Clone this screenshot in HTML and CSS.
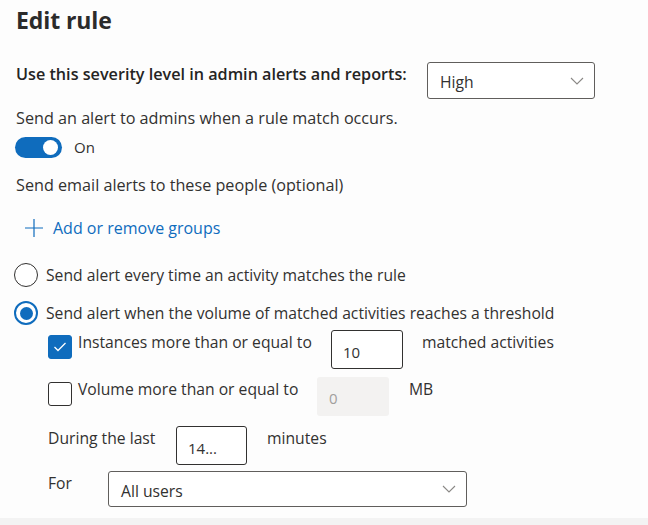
FILE: index.html
```html
<!DOCTYPE html>
<html>
<head>
<meta charset="utf-8">
<link rel="stylesheet" href="styles.css">
</head>
<body>
<div class="panel">
  <h1 class="title">Edit rule</h1>
  <div class="sev-row">
    <div class="sev-label">Use this severity level in admin alerts and reports:</div>
    <div class="select sev-select"><span>High</span><svg class="chev" width="14" height="8" viewBox="0 0 14 8"><path d="M1 1l6 6 6-6" fill="none" stroke="#8a8886" stroke-width="1.1"/></svg></div>
  </div>
  <div class="line l-admins">Send an alert to admins when a rule match occurs.</div>
  <div class="toggle-row">
    <span class="toggle"><span class="knob"></span></span>
    <span class="toggle-text">On</span>
  </div>
  <div class="line l-email">Send email alerts to these people (optional)</div>
  <div class="add-row">
    <svg class="plus" width="18" height="18" viewBox="0 0 18 18"><path d="M9 0v18M0 9h18" stroke="#0f6cbd" stroke-width="1.2"/></svg>
    <span class="add-text">Add or remove groups</span>
  </div>
  <div class="radio-row r1">
    <span class="radio"></span>
    <span class="radio-text">Send alert every time an activity matches the rule</span>
  </div>
  <div class="radio-row r2">
    <span class="radio on"><span class="dot"></span></span>
    <span class="radio-text">Send alert when the volume of matched activities reaches a threshold</span>
  </div>
  <div class="threshold">
    <div class="check-row c1">
      <span class="check on"><svg width="14" height="10" viewBox="0 0 14 10"><path d="M1.5 5l3.5 3.5 7.5-7.5" fill="none" stroke="#fff" stroke-width="1.3"/></svg></span>
      <span class="check-text t1">Instances more than or equal to</span>
      <span class="input in1">10</span>
      <span class="after a1">matched activities</span>
    </div>
    <div class="check-row c2">
      <span class="check"></span>
      <span class="check-text t2">Volume more than or equal to</span>
      <span class="input disabled in2">0</span>
      <span class="after a2">MB</span>
    </div>
    <div class="field-row during">
      <span class="field-label fl1">During the last</span>
      <span class="input in3">14...</span>
      <span class="after a3">minutes</span>
    </div>
    <div class="field-row for">
      <span class="field-label fl2">For</span>
      <div class="select for-select"><span>All users</span><svg class="chev" width="14" height="8" viewBox="0 0 14 8"><path d="M1 1l6 6 6-6" fill="none" stroke="#8a8886" stroke-width="1.1"/></svg></div>
    </div>
  </div>
</div>
<div class="footer"></div>
</body>
</html>
```
FILE: styles.css
```css
html, body {
  margin: 0;
  padding: 0;
  background: #fdfdfd;
}
body {
  width: 648px;
  height: 525px;
  overflow: hidden;
  position: relative;
  font-family: "Open Sans", "Noto Sans", sans-serif;
  font-size: 15.7px;
  color: #323130;
}
.panel {
  padding: 0 16px;
  height: 518px;
}
.title {
  margin: 5px 0 0;
  font-size: 23px;
  line-height: 30px;
  font-weight: 700;
  color: #2b2b2b;
  letter-spacing: -0.1px;
}
.sev-row {
  display: flex;
  align-items: flex-start;
  margin-top: 27px;
}
.sev-label {
  font-weight: 600;
  font-size: 16.2px;
  line-height: 20px;
  padding-top: 2px;
  width: 411px;
  white-space: nowrap;
  color: #252423;
}
.select {
  box-sizing: border-box;
  border: 1px solid #605e5c;
  border-radius: 3px;
  display: flex;
  align-items: center;
  justify-content: space-between;
  padding: 0 10px 0 12px;
  background: #fff;
}
.select span { padding-top: 3px; }
.sev-select {
  width: 168px;
  height: 37px;
}
.for-select {
  width: 359px;
  height: 36px;
}
.line {
  line-height: 20px;
  font-size: 16.2px;
}
.l-admins { margin-top: 9px; }
.toggle-row {
  display: flex;
  align-items: center;
  margin-top: 9px;
  height: 20px;
}
.toggle {
  box-sizing: border-box;
  width: 47px;
  height: 21px;
  border-radius: 11px;
  background: #0f6cbd;
  position: relative;
  display: inline-block;
  margin-left: -1px;
}
.knob {
  position: absolute;
  right: 4px;
  top: 3px;
  width: 15px;
  height: 15px;
  border-radius: 50%;
  background: #fff;
}
.toggle-text {
  margin-left: 12px;
  font-size: 15px;
}
.l-email { margin-top: 18px; }
.add-row {
  display: flex;
  align-items: center;
  margin-top: 23px;
  height: 20px;
  padding-left: 9px;
}
.add-text {
  color: #0f6cbd;
  margin-left: 10px;
  font-size: 16px;
}
.radio-row {
  display: flex;
  align-items: center;
  height: 24px;
}
.r1 { margin-top: 25px; }
.r2 { margin-top: 14px; }
.radio {
  box-sizing: border-box;
  width: 24px;
  height: 24px;
  border-radius: 50%;
  border: 1.5px solid #323130;
  margin-left: -2px;
  display: flex;
  align-items: center;
  justify-content: center;
  background: #fff;
}
.radio.on {
  border: 2px solid #0f6cbd;
}
.dot {
  width: 13px;
  height: 13px;
  border-radius: 50%;
  background: #0f6cbd;
}
.radio-text {
  margin-left: 8px;
}
.threshold {
  padding-left: 32px;
}
.check-row, .field-row {
  display: flex;
  align-items: flex-start;
}
.c1 { margin-top: 5px; }
.c2 { margin-top: 8px; }
.during { margin-top: 10px; }
.for { margin-top: 6px; }
.check {
  box-sizing: border-box;
  width: 24px;
  height: 24px;
  border: 1px solid #323130;
  border-radius: 3px;
  margin-top: 5px;
  display: flex;
  align-items: center;
  justify-content: center;
  background: #fff;
}
.check.on {
  background: #0f6cbd;
  border-color: #0f6cbd;
}
.check-text {
  margin-left: 6px;
  line-height: 20px;
  padding-top: 2px;
  white-space: nowrap;
}
.t1 { width: 253px; }
.t2 { width: 239px; }
.input {
  box-sizing: border-box;
  height: 39px;
  border: 1px solid #323130;
  border-radius: 3px;
  padding: 11px 0 0 11px;
  line-height: 20px;
  background: #fff;
  font-size: 15px;
}
.in1 { width: 72px; }
.in2 { width: 72px; border: none; background: #f3f2f1; color: #a19f9d; padding-left: 12px; }
.in3 { width: 71px; }
.after {
  line-height: 20px;
  padding-top: 2px;
}
.a1 { margin-left: 19px; }
.a2 { margin-left: 20px; }
.a3 { margin-left: 20px; }
.field-label {
  line-height: 20px;
  padding-top: 2px;
}
.fl1 { width: 128px; }
.fl2 { width: 60px; }
.footer {
  position: absolute;
  left: 0;
  right: 0;
  bottom: 0;
  height: 7px;
  background: #f3f3f3;
}
```
